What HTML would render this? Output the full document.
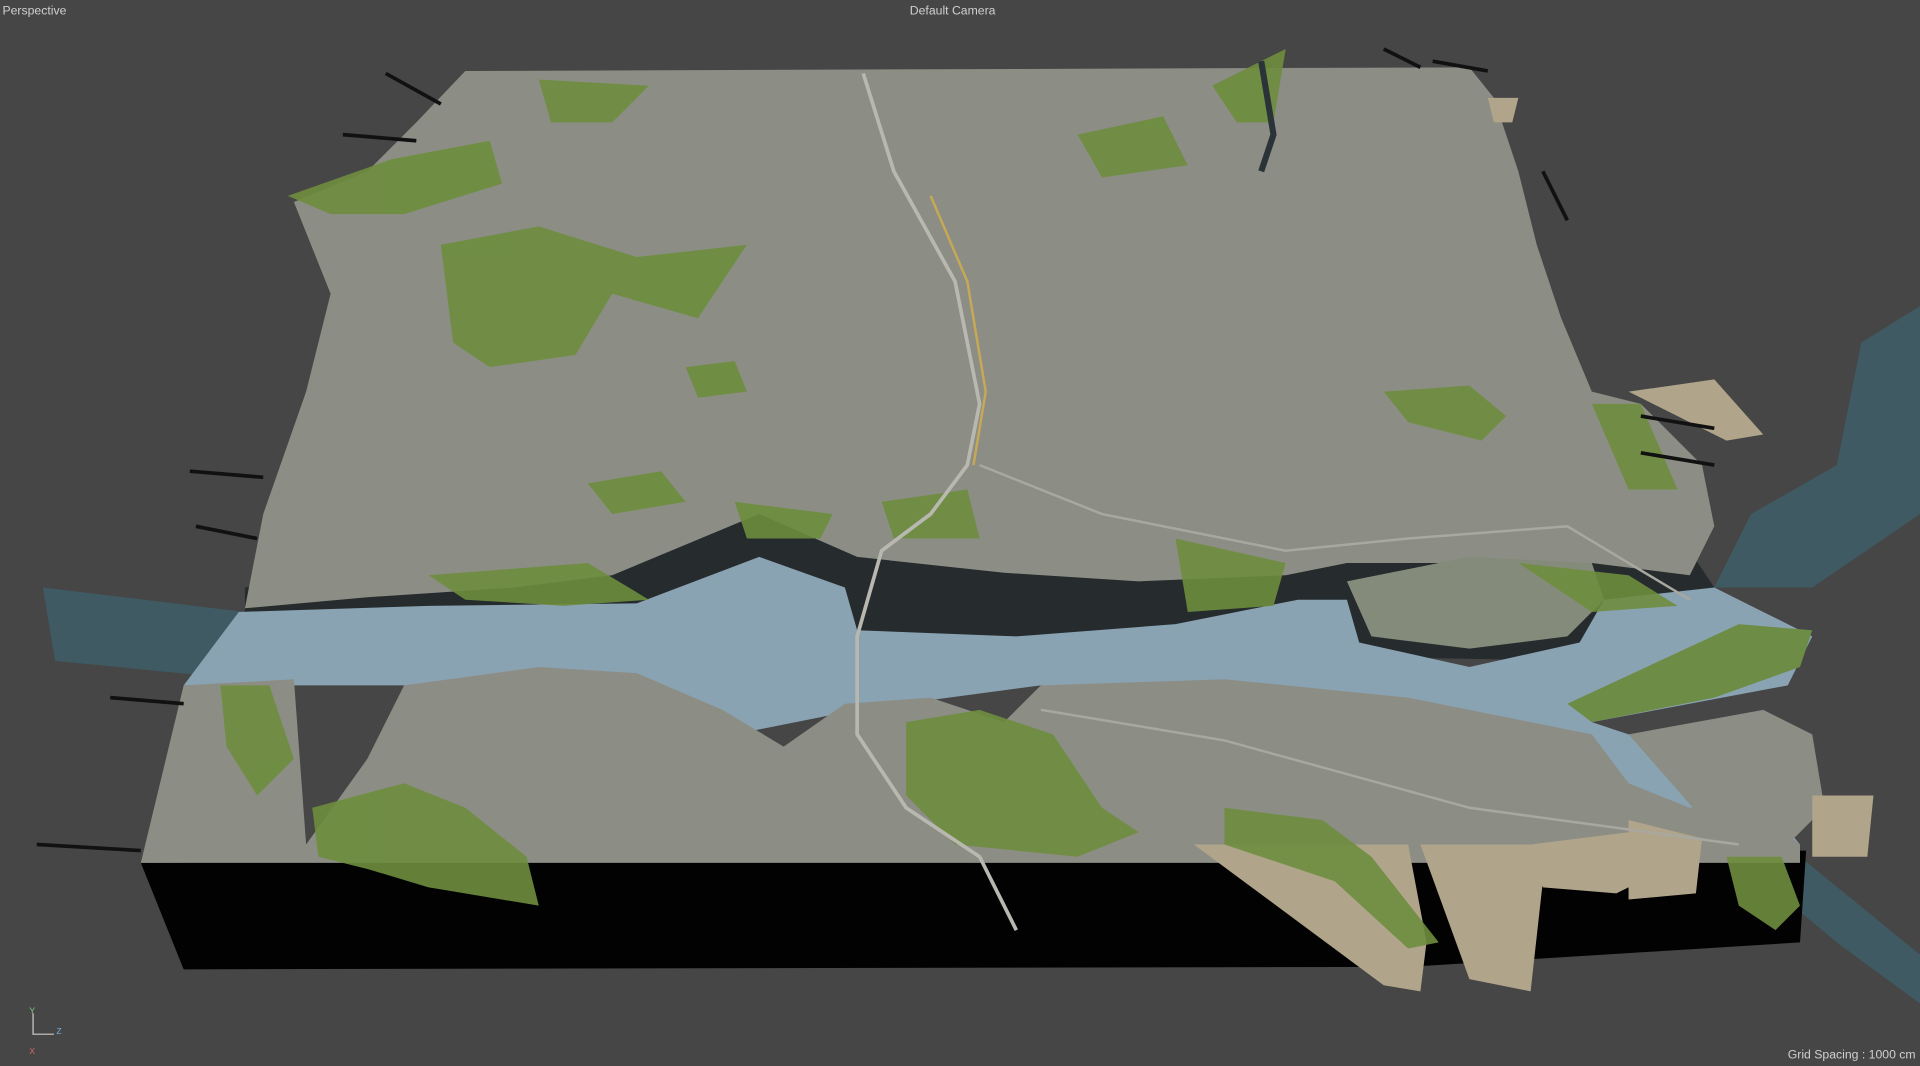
<!DOCTYPE html>
<html><head><style>
html,body{margin:0;padding:0;background:#464646;width:1920px;height:1066px;overflow:hidden}
svg{display:block}
</style></head><body>
<svg width="1920" height="1066" viewBox="0 0 1568 871" preserveAspectRatio="none" xmlns="http://www.w3.org/2000/svg">
<rect width="1568" height="871" fill="#464646"/>
<polygon points="35,480 200,500 198,555 45,540" fill="#3f5a63"/>
<polygon points="1520,280 1568,250 1568,420 1480,480 1400,480 1430,420 1500,380" fill="#3f5a63"/>
<polygon points="1470,700 1568,780 1568,820 1500,770 1440,720" fill="#3f5a63"/>
<polygon points="115,705 1475,695 1470,770 1150,790 150,792" fill="#020202"/>
<!-- backing -->
<polygon points="200,480 600,415 1380,450 1400,480 1300,540 700,530 200,510" fill="#262b2e"/>
<!-- river -->
<polygon points="195,500 350,495 520,493 620,455 690,480 700,515 830,520 960,510 1060,490 1100,490 1110,525 1200,545 1290,525 1310,490 1400,480 1440,500 1480,520 1460,560 1300,590 1330,600 1420,630 1470,690 1430,690 1300,660 1150,600 1000,580 850,560 700,580 600,600 500,560 300,560 150,560" fill="#8aa3b3"/>
<!-- north land -->
<polygon points="380,58 1200,55 1220,80 1240,140 1255,200 1275,260 1300,320 1340,330 1390,380 1400,430 1380,470 1300,460 1100,460 1050,470 930,475 820,468 700,455 620,420 500,470 420,480 300,488 200,497 215,420 250,320 270,240 240,165 300,140 340,100" fill="#8c8e85"/>
<!-- south land -->
<polygon points="150,560 240,555 250,690 300,620 330,560 440,545 520,550 590,580 640,610 690,575 760,570 820,590 850,560 1000,555 1150,570 1300,600 1330,640 1380,660 1420,650 1470,690 1470,705 115,705" fill="#8c8e85"/>
<polygon points="1330,600 1440,580 1480,600 1490,660 1460,690 1400,680" fill="#8c8e85"/>
<polygon points="1280,575 1420,510 1480,515 1470,545 1400,570 1300,590" fill="#6d8c45"/>
<polygon points="1100,475 1200,455 1300,460 1310,490 1280,520 1200,530 1120,520" fill="#858b7a"/>
<polygon points="975,690 1150,690 1165,770 1160,810 1130,805" fill="#b0a48a"/>
<polygon points="1160,690 1250,690 1260,720 1250,810 1200,800" fill="#b0a48a"/>
<polygon points="1250,690 1330,680 1340,720 1320,730 1260,725" fill="#b0a48a"/>
<polygon points="1330,670 1390,685 1385,730 1330,735" fill="#b0a48a"/>
<polygon points="1480,650 1530,650 1525,700 1480,700" fill="#b0a48a"/>
<polygon points="1330,320 1400,310 1440,355 1410,360 1370,340" fill="#b0a48a"/>
<polygon points="1215,80 1240,80 1235,100 1220,100" fill="#b0a48a"/>
<g fill="#6e8d3e" opacity="0.9">
<polygon points="360,200 440,185 520,210 610,200 570,260 500,240 470,290 400,300 370,280"/>
<polygon points="235,160 320,130 400,115 410,150 330,175 270,175"/>
<polygon points="440,65 530,70 500,100 450,100"/>
<polygon points="350,470 480,460 530,490 460,495 380,490"/>
<polygon points="480,395 540,385 560,410 500,420"/>
<polygon points="600,410 680,420 670,440 610,440"/>
<polygon points="1130,320 1200,315 1230,340 1210,360 1150,345"/>
<polygon points="1300,330 1340,330 1370,400 1330,400"/>
<polygon points="740,590 800,580 860,600 900,660 930,680 880,700 780,690 740,650"/>
<polygon points="255,660 330,640 380,660 430,700 440,740 350,725 300,710 260,700"/>
<polygon points="180,560 220,560 240,620 210,650 185,610"/>
<polygon points="1000,660 1080,670 1120,700 1175,770 1150,775 1090,720 1000,690"/>
<polygon points="1410,700 1455,700 1470,740 1450,760 1420,740"/>
<polygon points="990,70 1050,40 1040,100 1010,100"/>
<polygon points="960,440 1050,460 1040,495 970,500"/>
<polygon points="720,410 790,400 800,440 730,440"/>
<polygon points="560,300 600,295 610,320 570,325"/>
<polygon points="880,110 950,95 970,135 900,145"/>
<polygon points="1240,460 1330,470 1370,495 1300,500"/>
</g>
<path d="M705,60 L730,140 L780,230 L800,330 L790,380 L760,420 L720,450 L700,520 L700,600 L740,660 L800,700 L830,760" stroke="#b8b8b0" stroke-width="3" fill="none"/>
<path d="M760,160 L790,230 L805,320 L795,380" stroke="#c7a955" stroke-width="2" fill="none"/>
<path d="M800,380 L900,420 L1050,450 L1150,440 L1280,430 L1380,490" stroke="#a8a8a0" stroke-width="2" fill="none"/>
<path d="M1030,50 L1040,110 L1030,140" stroke="#2a3438" stroke-width="5" fill="none"/>
<path d="M850,580 L1000,605 L1200,660 L1420,690" stroke="#a8a8a0" stroke-width="2" fill="none"/>
<g stroke="#111" stroke-width="3">
<line x1="155" y1="385" x2="215" y2="390"/><line x1="160" y1="430" x2="210" y2="440"/><line x1="90" y1="570" x2="150" y2="575"/><line x1="30" y1="690" x2="115" y2="695"/>
<line x1="315" y1="60" x2="360" y2="85"/><line x1="280" y1="110" x2="340" y2="115"/><line x1="1260" y1="140" x2="1280" y2="180"/><line x1="1340" y1="340" x2="1400" y2="350"/><line x1="1340" y1="370" x2="1400" y2="380"/>
<line x1="1130" y1="40" x2="1160" y2="55"/><line x1="1170" y1="50" x2="1215" y2="58"/>
</g>
<text x="2" y="12" fill="#d0d0d0" font-family="Liberation Sans, sans-serif" font-size="10">Perspective</text>
<text x="743" y="12" fill="#d0d0d0" font-family="Liberation Sans, sans-serif" font-size="10">Default Camera</text>
<text x="1460" y="865" fill="#d0d0d0" font-family="Liberation Sans, sans-serif" font-size="10">Grid Spacing : 1000 cm</text>
<path d="M27,828 L27,845 L44,845" stroke="#ccc" stroke-width="1" fill="none"/>
<text x="24" y="828" fill="#8c8" font-family="Liberation Sans" font-size="7">Y</text>
<text x="46" y="845" fill="#7ad" font-family="Liberation Sans" font-size="7">Z</text>
<text x="24" y="861" fill="#d66" font-family="Liberation Sans" font-size="7">X</text>
</svg>
</body></html>
